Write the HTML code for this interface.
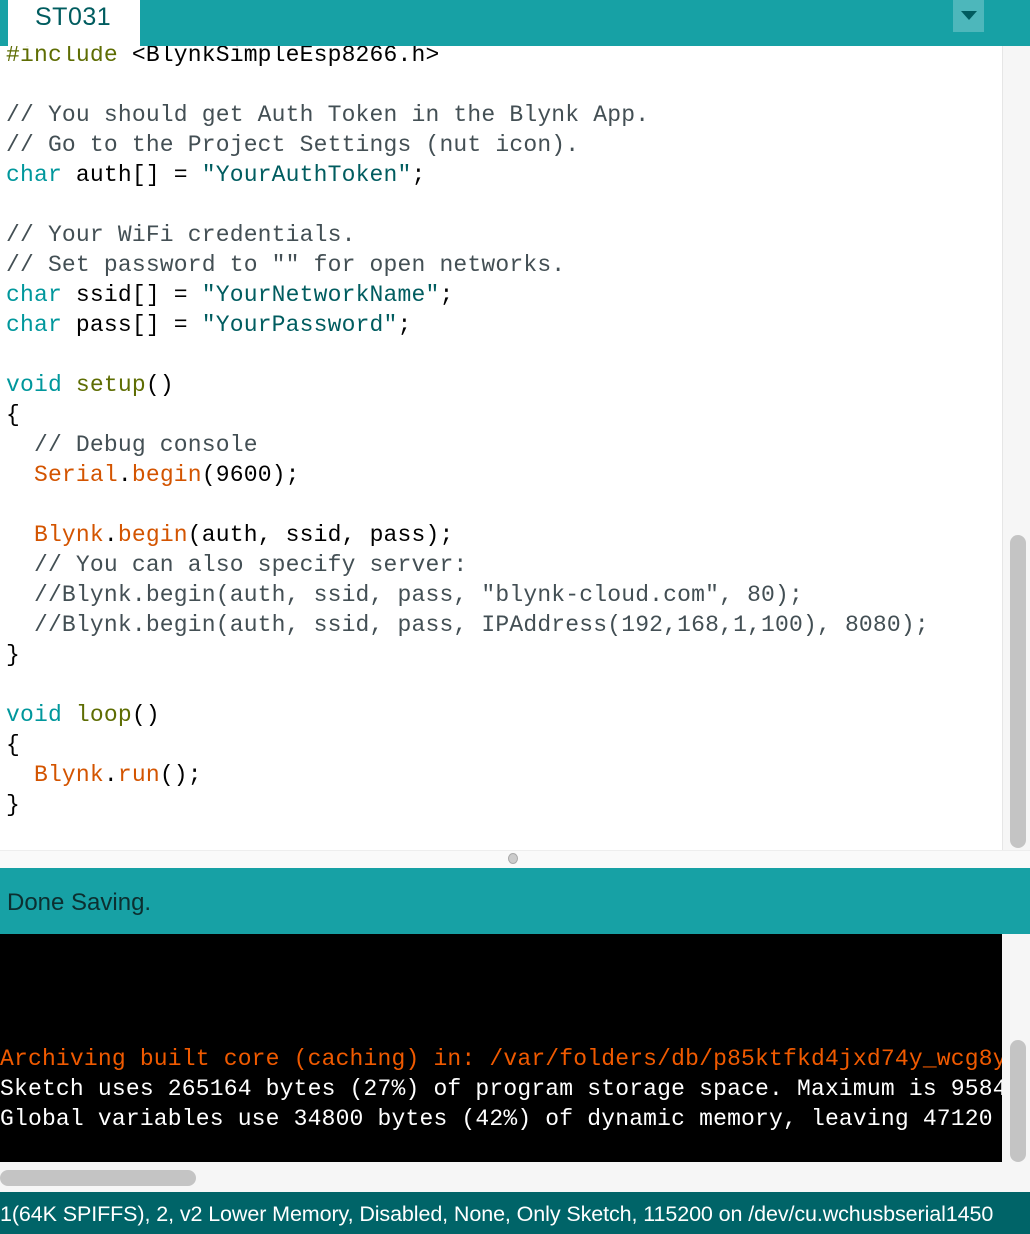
<!DOCTYPE html>
<html><head><meta charset="utf-8"><style>
*{margin:0;padding:0;box-sizing:border-box}
body{width:1030px;height:1234px;overflow:hidden;background:#fff;position:relative;font-family:"Liberation Mono",monospace}
.top{position:absolute;left:0;top:0;width:1030px;height:46px;background:#17a1a5;z-index:2}
.tab{position:absolute;left:8px;top:0;width:132px;height:46px;background:#fff;color:#005c5f;font-family:"Liberation Sans",sans-serif;font-size:25px;padding:3px 0 0 27px;letter-spacing:0.5px}
.dd{position:absolute;left:953px;top:0;width:31px;height:32px;background:#4db7bb}
.dd:after{content:"";position:absolute;left:8px;top:11px;border-left:8px solid transparent;border-right:8px solid transparent;border-top:9px solid #005c5f}
.ed{position:absolute;left:0;top:0;width:1002px;height:850px;overflow:hidden}
pre{position:absolute;left:6px;font-family:"Liberation Mono",monospace;font-size:23px;line-height:30px;letter-spacing:0.18px;color:#000;white-space:pre}
.k{color:#00979c}.f{color:#5e6d03}.o{color:#d35400}.s{color:#005c5f}.c{color:#434f54}
.vs{position:absolute;left:1002px;top:46px;width:28px;height:804px;background:#f6f6f6;border-left:1px solid #e6e6e6}
.vt{position:absolute;left:1010px;top:535px;width:16px;height:313px;background:#c4c4c4;border-radius:8px}
.div{position:absolute;left:0;top:850px;width:1030px;height:18px;background:#fafafa;border-top:1px solid #eee}
.dot{position:absolute;left:508px;top:853px;width:10px;height:11px;border-radius:50%;background:#ccc;border:1px solid #aaa}
.st{position:absolute;left:0;top:868px;width:1030px;height:66px;background:#17a1a5;color:#0c2f30;font-family:"Liberation Sans",sans-serif;font-size:24px;padding:21px 0 0 7px;letter-spacing:0}
.con{position:absolute;left:0;top:934px;width:1002px;height:228px;background:#000;overflow:hidden}
.con pre{left:0;color:#fff}
.con .r{color:#f05a00}
.cs{position:absolute;left:1002px;top:934px;width:28px;height:258px;background:#f6f6f6}
.ct{position:absolute;left:1010px;top:1040px;width:16px;height:122px;background:#c4c4c4;border-radius:8px}
.hs{position:absolute;left:0;top:1162px;width:1002px;height:30px;background:#f6f6f6}
.ht{position:absolute;left:0;top:1170px;width:196px;height:16px;background:#c4c4c4;border-radius:8px}
.bar{position:absolute;left:0;top:1192px;width:1030px;height:42px;background:#006468;color:#fff;font-family:"Liberation Sans",sans-serif;font-size:21.5px;padding:10px 0 0 0;letter-spacing:-0.1px;white-space:nowrap;overflow:hidden}
</style></head><body>
<div class="ed"><pre style="top:40px"><span class="f">#include</span> &lt;BlynkSimpleEsp8266.h&gt;

<span class="c">// You should get Auth Token in the Blynk App.</span>
<span class="c">// Go to the Project Settings (nut icon).</span>
<span class="k">char</span> auth[] = <span class="s">"YourAuthToken"</span>;

<span class="c">// Your WiFi credentials.</span>
<span class="c">// Set password to "" for open networks.</span>
<span class="k">char</span> ssid[] = <span class="s">"YourNetworkName"</span>;
<span class="k">char</span> pass[] = <span class="s">"YourPassword"</span>;

<span class="k">void</span> <span class="f">setup</span>()
{
  <span class="c">// Debug console</span>
  <span class="o">Serial</span>.<span class="o">begin</span>(9600);

  <span class="o">Blynk</span>.<span class="o">begin</span>(auth, ssid, pass);
  <span class="c">// You can also specify server:</span>
  <span class="c">//Blynk.begin(auth, ssid, pass, "blynk-cloud.com", 80);</span>
  <span class="c">//Blynk.begin(auth, ssid, pass, IPAddress(192,168,1,100), 8080);</span>
}

<span class="k">void</span> <span class="f">loop</span>()
{
  <span class="o">Blynk</span>.<span class="o">run</span>();
}</pre></div>
<div class="top"><div class="tab">ST031</div><div class="dd"></div></div>
<div class="vs"></div><div class="vt"></div>
<div class="div"></div><div class="dot"></div>
<div class="st">Done Saving.</div>
<div class="con"><pre style="top:110px"><span class="r">Archiving built core (caching) in: /var/folders/db/p85ktfkd4jxd74y_wcg8y</span>
Sketch uses 265164 bytes (27%) of program storage space. Maximum is 9584
Global variables use 34800 bytes (42%) of dynamic memory, leaving 47120</pre></div>
<div class="cs"></div><div class="ct"></div>
<div class="hs"></div><div class="ht"></div>
<div class="bar">1(64K SPIFFS), 2, v2 Lower Memory, Disabled, None, Only Sketch, 115200 on /dev/cu.wchusbserial1450</div>
</body></html>
